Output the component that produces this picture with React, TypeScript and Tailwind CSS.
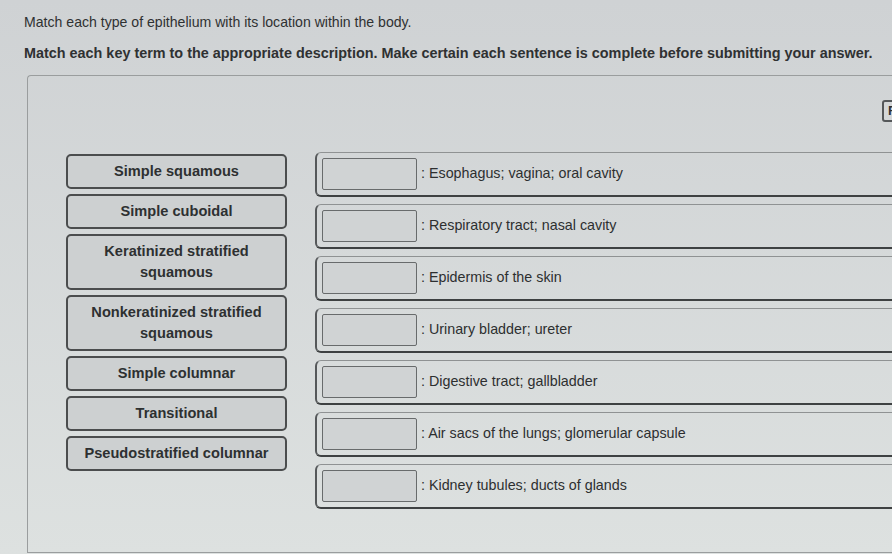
const terms = [
  ['Simple squamous'],
  ['Simple cuboidal'],
  ['Keratinized stratified', 'squamous'],
  ['Nonkeratinized stratified', 'squamous'],
  ['Simple columnar'],
  ['Transitional'],
  ['Pseudostratified columnar'],
];

const locations = [
  'Esophagus; vagina; oral cavity',
  'Respiratory tract; nasal cavity',
  'Epidermis of the skin',
  'Urinary bladder; ureter',
  'Digestive tract; gallbladder',
  'Air sacs of the lungs; glomerular capsule',
  'Kidney tubules; ducts of glands',
];

function TermCard({ lines }: { lines: string[] }) {
  return (
    <div className="w-[221px] border-2 border-[#4b4d4e] rounded-[5px] bg-[#cdd0d1] px-2 py-[5px] text-center text-[14.6px] font-bold leading-[21px] text-[#2e3031]">
      {lines.map((l) => (
        <div key={l}>{l}</div>
      ))}
    </div>
  );
}

function LocationRow({ text }: { text: string }) {
  return (
    <div className="w-[620px] flex items-center h-[45px] pl-[5px] border-t border-t-[#8f9293] border-l-2 border-l-[#55585a] border-b-2 border-b-[#3e4142] rounded-l-[6px]">
      <div className="w-[95px] h-[32px] shrink-0 border-[1.5px] border-[#686b6c] rounded-[2px] bg-[#d0d3d4]" />
      <span className="ml-[4px] text-[14.3px] text-[#2d2f30]">: {text}</span>
    </div>
  );
}

export default function App() {
  return (
    <div className="w-[892px] h-[554px] overflow-hidden bg-linear-to-b from-[#cfd2d4] to-[#dde1e0] font-['Liberation_Sans',Arial,sans-serif] text-[#2f3132] pl-[24px] pt-[14px]">
      <p className="text-[14.1px] leading-[17px]">
        Match each type of epithelium with its location within the body.
      </p>
      <p className="mt-[14px] text-[14.4px] leading-[17px] font-bold">
        Match each key term to the appropriate description. Make certain each sentence is complete before submitting your answer.
      </p>
      <div className="mt-[13px] ml-[3px] w-[900px] h-[478px] border-t border-l border-b border-[#9a9d9e] rounded-tl-[4px] pt-[24px]">
        <div className="flex justify-start pl-[854px]">
          <div className="h-[22px] px-[4px] border-2 border-[#55585a] rounded-[3px] bg-[#d4d7d8] text-[13px] font-bold leading-[18px]">
            Reset
          </div>
        </div>
        <div className="flex mt-[30px]">
          <div className="ml-[38px] flex flex-col gap-[5px] pt-[2px]">
            {terms.map((t) => (
              <TermCard key={t.join(' ')} lines={t} />
            ))}
          </div>
          <div className="ml-[28px] flex flex-col gap-[7px]">
            {locations.map((l) => (
              <LocationRow key={l} text={l} />
            ))}
          </div>
        </div>
      </div>
    </div>
  );
}
